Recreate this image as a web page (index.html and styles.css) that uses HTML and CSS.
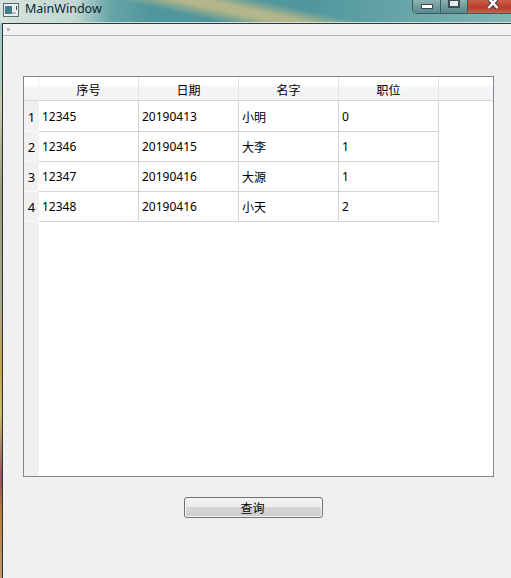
FILE: index.html
```html
<!DOCTYPE html>
<html lang="zh">
<head>
<meta charset="utf-8">
<title>MainWindow</title>
<link rel="stylesheet" href="styles.css">
</head>
<body>
<div class="frame">
  <header class="titlebar">
    <svg class="app-icon" width="16" height="14" viewBox="0 0 16 14">
      <rect x="0.5" y="0.5" width="15" height="13" fill="#e8eeee" stroke="#5a6a70"/>
      <rect x="2" y="3" width="7" height="8" fill="#3f8088"/>
      <rect x="9" y="9" width="4" height="2" fill="#b0b8b8"/>
      <rect x="13" y="3" width="1" height="4" fill="#40484c"/>
    </svg>
    <span class="title">MainWindow</span>
    <div class="controls">
      <div class="ctl ctl-min"><span class="glyph-min"></span></div>
      <div class="ctl ctl-max"><span class="glyph-max"></span></div>
      <div class="ctl ctl-close">
        <svg width="16" height="9" viewBox="0 0 16 9"><path d="M3.5 -2 L12.5 8 M12.5 -2 L3.5 8" stroke="#3c3c46" stroke-width="4.4"/><path d="M3.5 -2 L12.5 8 M12.5 -2 L3.5 8" stroke="#fff" stroke-width="2.6"/></svg>
      </div>
    </div>
  </header>
  <div class="lower">
    <div class="edge"></div>
    <div class="client">
      <div class="menubar"><span class="grip"></span></div>
      <main class="central">
        <div class="tableview">
          <div class="hcell corner"></div>
          <div class="hcell">序号</div>
          <div class="hcell">日期</div>
          <div class="hcell">名字</div>
          <div class="hcell">职位</div>
          <div class="hcell hfill"></div>

          <div class="rowhead first">1</div>
          <div class="cell first">12345</div>
          <div class="cell first">20190413</div>
          <div class="cell first">小明</div>
          <div class="cell first">0</div>
          <div class="blank"></div>

          <div class="rowhead">2</div>
          <div class="cell">12346</div>
          <div class="cell">20190415</div>
          <div class="cell">大李</div>
          <div class="cell">1</div>
          <div class="blank"></div>

          <div class="rowhead">3</div>
          <div class="cell">12347</div>
          <div class="cell">20190416</div>
          <div class="cell">大源</div>
          <div class="cell">1</div>
          <div class="blank"></div>

          <div class="rowhead">4</div>
          <div class="cell">12348</div>
          <div class="cell">20190416</div>
          <div class="cell">小天</div>
          <div class="cell">2</div>
          <div class="blank"></div>

          <div class="headfill"></div>
          <div class="bodyfill"></div>
        </div>
        <button class="query" type="button">查询</button>
      </main>
    </div>
  </div>
</div>
</body>
</html>
```

FILE: styles.css
```css
* { box-sizing: border-box; }
html, body { margin: 0; padding: 0; }
body {
  width: 511px;
  height: 578px;
  overflow: hidden;
  font-family: "Noto Sans", "Noto Sans CJK SC", sans-serif;
  font-size: 12px;
  color: #000;
  background: #f0f0f0;
}
.frame {
  display: flex;
  flex-direction: column;
  height: 578px;
}
.titlebar {
  display: flex;
  align-items: flex-start;
  height: 23px;
  flex: none;
  border-bottom: 1px solid #d4e2dc;
  background:
    linear-gradient(90deg, rgba(222,232,224,0.95) 0, rgba(205,222,216,0.9) 75px, rgba(130,180,180,0.5) 110px, rgba(79,151,156,0) 150px),
    linear-gradient(12.4deg, rgba(179,181,138,0) 36%, #b3b58a 45%, #b3b58a 50%, rgba(179,181,138,0) 59%),
    linear-gradient(90deg, rgba(150,195,190,0) 60%, rgba(150,195,190,0.7) 100%),
    #4f979c;
}
.app-icon {
  margin: 3px 0 0 3px;
  flex: none;
}
.title {
  margin: 2px 0 0 6px;
  font-size: 12.5px;
  line-height: 14px;
  color: #0c2430;
}
.controls {
  display: flex;
  margin-left: auto;
  height: 14px;
  border: 1px solid #3e5a60;
  border-top: 0;
  border-right: 0;
  border-radius: 0 0 0 5px;
  overflow: hidden;
}
.ctl {
  display: flex;
  justify-content: center;
  height: 13px;
}
.ctl-min {
  width: 28px;
  border-right: 1px solid #3e5a60;
  background: linear-gradient(180deg, #8fb0b0 0, #6d9a9c 55%, #5a8a8e 100%);
}
.ctl-max {
  width: 27px;
  border-right: 1px solid #3e5a60;
  background: linear-gradient(180deg, #8fb0b0 0, #6d9a9c 55%, #5a8a8e 100%);
}
.ctl-close {
  width: 43px;
  padding-left: 6px;
  background: linear-gradient(180deg, #c9604a 0, #b83d28 60%, #c06a50 100%);
}
.glyph-min {
  width: 12px;
  height: 5px;
  margin-top: 4px;
  background: #fff;
  border: 1px solid #3e4a50;
}
.glyph-max {
  width: 12px;
  height: 9px;
  margin-top: -1px;
  background: #e8eef0;
  border: 2px solid #3e5056;
  box-shadow: inset 0 0 0 1px #e8eef0;
}
.lower {
  display: flex;
  flex: 1;
  min-height: 0;
}
.edge {
  width: 3px;
  flex: none;
  border-right: 1px solid #2c3330;
  background: linear-gradient(180deg, #9cc8c6 0, #a8c8c0 10%, #c8c8b0 15%, #9a9a80 30%, #a8a890 50%, #c4a050 62%, #c8bc70 70%, #905060 82%, #b08040 88%, #c09870 100%);
}
.client {
  flex: 1;
  display: flex;
  flex-direction: column;
  min-width: 0;
  border-top: 1px solid #2c3a38;
}
.menubar {
  height: 12px;
  flex: none;
  border-bottom: 1px solid #b4b4b4;
  background: #f2f2f2;
  display: flex;
  align-items: flex-start;
}
.grip {
  width: 3px;
  height: 3px;
  margin: 4px 0 0 4px;
  background: #b8b8b8;
}
.central {
  flex: 1;
  padding: 40px 18px 0 20px;
  display: flex;
  flex-direction: column;
  align-items: flex-start;
}
.tableview {
  width: 471px;
  height: 401px;
  flex: none;
  display: grid;
  grid-template-columns: 15px repeat(4, 100px) 1fr;
  grid-template-rows: 24px 31px 30px 30px 30px 1fr;
  border: 1px solid #85858f;
  background: #fff;
}
.hcell {
  display: flex;
  align-items: center;
  justify-content: center;
  padding-top: 2px;
  border-right: 1px solid #e6e6e8;
  border-bottom: 1px solid #d5d5d8;
  background: linear-gradient(180deg, #fff 0, #fff 36%, #f5f6f8 42%, #f1f2f4 100%);
}
.corner { border-right-color: #f0f0f2; }
.hfill { border-right: 0; }
.rowhead {
  display: flex;
  align-items: center;
  justify-content: center;
  font-size: 13px;
  background: linear-gradient(180deg, #f0f0f0 0, #f2f2f4 100%);
  border-bottom: 1px solid #fafafa;
}
.rowhead.first { padding-top: 1px; }
.cell {
  display: flex;
  align-items: center;
  padding: 0 0 0 3px;
  border-right: 1px solid #d5d5d5;
  border-bottom: 1px solid #d5d5d5;
}
.cell.first {
  padding-top: 1px;
}
.blank { background: #fff; }
.headfill { background: #f0f0f0; }
.bodyfill { grid-column: 2 / 7; background: #fff; }
.query {
  width: 139px;
  height: 21px;
  margin: 20px 0 0 161px;
  padding: 0 2px 0 0;
  font: inherit;
  color: #000;
  border: 1px solid #707070;
  border-radius: 3px;
  box-shadow: inset 0 0 0 1px #f4f4f4;
  background: linear-gradient(180deg, #f2f2f2 0, #ebebeb 47%, #d6d6d6 48%, #cfcfcf 100%);
}
```
